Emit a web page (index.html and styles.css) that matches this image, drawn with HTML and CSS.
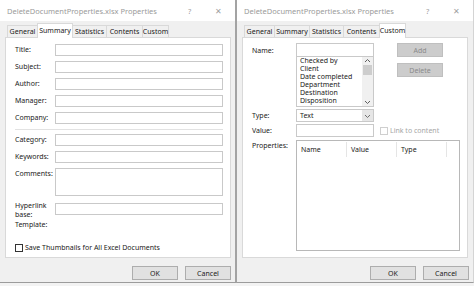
FILE: index.html
```html
<!DOCTYPE html>
<html lang="en">
<head>
<meta charset="UTF-8">
<title>Properties</title>
<link rel="stylesheet" href="styles.css">
</head>
<body>
<div class="screen">

  <!-- Summary tab dialog -->
  <div class="dialog left">
    <div class="titlebar">
      <span class="title">DeleteDocumentProperties.xlsx Properties</span>
      <span class="help">?</span>
      <span class="close">&#x2715;</span>
    </div>
    <div class="tabs">
      <div class="tab t-general">General</div>
      <div class="tab t-summary selected">Summary</div>
      <div class="tab t-stats">Statistics</div>
      <div class="tab t-contents">Contents</div>
      <div class="tab t-custom">Custom</div>
    </div>
    <div class="panel summary">
      <div class="row"><label>Title:</label><div class="input"></div></div>
      <div class="row"><label>Subject:</label><div class="input"></div></div>
      <div class="row"><label>Author:</label><div class="input"></div></div>
      <div class="row"><label>Manager:</label><div class="input"></div></div>
      <div class="row"><label>Company:</label><div class="input"></div></div>
      <div class="separator"></div>
      <div class="row first"><label>Category:</label><div class="input"></div></div>
      <div class="row"><label>Keywords:</label><div class="input"></div></div>
      <div class="row tall"><label>Comments:</label><div class="input"></div></div>
      <div class="row hyperlink"><label>Hyperlink<br>base:</label><div class="input"></div></div>
      <div class="row template"><label>Template:</label></div>
      <div class="check-row"><span class="checkbox"></span><span>Save Thumbnails for All Excel Documents</span></div>
    </div>
    <div class="buttons">
      <div class="button">OK</div>
      <div class="button">Cancel</div>
    </div>
  </div>

  <!-- Custom tab dialog -->
  <div class="dialog right">
    <div class="titlebar">
      <span class="title">DeleteDocumentProperties.xlsx Properties</span>
      <span class="help">?</span>
      <span class="close">&#x2715;</span>
    </div>
    <div class="tabs">
      <div class="tab t-general">General</div>
      <div class="tab t-summary">Summary</div>
      <div class="tab t-stats">Statistics</div>
      <div class="tab t-contents">Contents</div>
      <div class="tab t-custom selected">Custom</div>
    </div>
    <div class="panel custom">
      <div class="name-area">
        <label class="c-label">Name:</label>
        <div class="name-group">
          <div class="input name-input"></div>
          <div class="listbox">
            <div class="items">
              <div>Checked by</div>
              <div>Client</div>
              <div>Date completed</div>
              <div>Department</div>
              <div>Destination</div>
              <div>Disposition</div>
            </div>
            <div class="scrollbar">
              <svg width="11" height="8" viewBox="0 0 11 8"><polyline points="3,5 5.5,2.5 8,5" fill="none" stroke="#606060" stroke-width="1"/></svg>
              <div class="thumb"></div>
              <div class="track"></div>
              <svg width="11" height="8" viewBox="0 0 11 8"><polyline points="3,3 5.5,5.5 8,3" fill="none" stroke="#606060" stroke-width="1"/></svg>
            </div>
          </div>
        </div>
        <div class="side-buttons">
          <div class="button disabled">Add</div>
          <div class="button disabled">Delete</div>
        </div>
      </div>
      <div class="c-row type-row">
        <label class="c-label">Type:</label>
        <div class="combo">
          <span class="combo-text">Text</span>
          <span class="combo-btn"><svg width="11" height="10" viewBox="0 0 11 10"><polyline points="3,4 5.5,6.5 8,4" fill="none" stroke="#707070" stroke-width="1"/></svg></span>
        </div>
      </div>
      <div class="c-row value-row">
        <label class="c-label">Value:</label>
        <div class="input value-input"></div>
        <span class="checkbox disabled"></span>
        <span class="link-text">Link to content</span>
      </div>
      <div class="c-row props-row">
        <label class="c-label">Properties:</label>
        <div class="listview">
          <div class="lv-header">
            <div class="col">Name</div>
            <div class="col">Value</div>
            <div class="col">Type</div>
          </div>
        </div>
      </div>
    </div>
    <div class="buttons">
      <div class="button">OK</div>
      <div class="button">Cancel</div>
    </div>
  </div>

</div>
</body>
</html>
```

FILE: styles.css
```css
/* styles.css */
body {
  margin: 0;
  background-color: #f3f3f3;
  font-family: 'Noto Sans', 'Open Sans', sans-serif;
  font-size: 7px;
  color: #1a1a1a;
}

.screen {
  display: flex;
  width: 474px;
  height: 286px;
}

.dialog {
  width: 237px;
  height: 283px;
  box-sizing: border-box;
  background-color: #f0f0f0;
  border-bottom: 1px solid #9c9c9c;
}

.dialog.left {
  border-right: 2px solid #a3a3a3;
}

.dialog.right {
  border-right: 1px solid #d4d4d4;
}

/* title bar */
.titlebar {
  height: 21px;
  background-color: #fff;
  display: flex;
  align-items: center;
  padding-left: 7px;
  color: #9a9a9a;
  font-size: 7.5px;
}

.title {
  flex: 1;
}

.help {
  width: 27px;
  color: #a0a0a0;
}

.close {
  width: 20px;
  color: #a0a0a0;
  font-size: 8px;
}

/* tabs */
.tabs {
  display: flex;
  align-items: flex-end;
  height: 16px;
  padding-left: 7px;
}

.tab {
  height: 12px;
  box-sizing: border-box;
  border: 1px solid #d9d9d9;
  border-bottom: none;
  margin-right: -1px;
  display: flex;
  align-items: center;
  justify-content: center;
  background-color: #f0f0f0;
  position: relative;
}

.t-general { width: 31px; }
.t-summary { width: 36px; }
.t-stats { width: 35px; }
.t-contents { width: 37px; }
.t-custom { width: 27px; }

.tab.selected {
  height: 15px;
  background-color: #fff;
  margin-bottom: -1px;
  z-index: 1;
  padding-bottom: 2px;
}

/* tab page */
.panel {
  margin-left: 5px;
  width: 226px;
  height: 221px;
  box-sizing: border-box;
  background-color: #fff;
  border: 1px solid #d9d9d9;
}

.summary {
  padding: 6px 7px 0 9px;
}

.row {
  display: flex;
  height: 12px;
  margin-bottom: 5px;
}

.row label {
  width: 40px;
  line-height: 12px;
}

.input {
  flex: 1;
  box-sizing: border-box;
  border: 1px solid #c9c9c9;
  background-color: #fff;
}

.separator {
  height: 1px;
  background-color: #e2e2e2;
  margin: 1px 0 4px 0;
}

.row.tall {
  height: 28px;
  margin-bottom: 7px;
}

.row.hyperlink label {
  margin-top: -2px;
  line-height: 9px;
}

.row.template {
  margin-top: -1px;
}

.check-row {
  display: flex;
  align-items: center;
  margin-top: 12px;
}

.checkbox {
  width: 8px;
  height: 8px;
  box-sizing: border-box;
  border: 1px solid #333;
  background-color: #fff;
  margin-right: 2px;
}

/* bottom buttons */
.buttons {
  display: flex;
  justify-content: flex-end;
  gap: 7px;
  padding: 8px 4px 0 0;
}

.button {
  width: 46px;
  height: 14px;
  box-sizing: border-box;
  border: 1px solid #adadad;
  background-color: #e1e1e1;
  display: flex;
  align-items: center;
  justify-content: center;
}

.button.disabled {
  background-color: #cccccc;
  border-color: #bfbfbf;
  color: #8a8a8a;
}

/* custom tab */
.custom {
  padding: 5px 0 0 9px;
}

.c-label {
  width: 44px;
  flex-shrink: 0;
}

.name-area {
  display: flex;
}

.name-area .c-label {
  line-height: 16px;
}

.name-group {
  width: 78px;
}

.name-input {
  height: 14px;
}

.listbox {
  display: flex;
  height: 50px;
  box-sizing: border-box;
  border: 1px solid #c9c9c9;
  border-top: none;
  margin-top: 0;
}

.items {
  flex: 1;
  padding: 0 0 0 3px;
  line-height: 8px;
  font-size: 7px;
}

.scrollbar {
  width: 11px;
  background-color: #f0f0f0;
  display: flex;
  flex-direction: column;
}

.scrollbar svg {
  display: block;
}

.thumb {
  height: 10px;
  margin: 0 1px;
  background-color: #cdcdcd;
}

.track {
  flex: 1;
}

.side-buttons {
  margin-left: 23px;
  display: flex;
  flex-direction: column;
  gap: 6px;
}

.c-row {
  display: flex;
  align-items: center;
}

.type-row {
  margin-top: 2px;
}

.combo {
  width: 78px;
  height: 13px;
  box-sizing: border-box;
  border: 1px solid #c9c9c9;
  display: flex;
  align-items: center;
}

.combo-text {
  flex: 1;
  padding-left: 3px;
}

.combo-btn {
  width: 11px;
  height: 11px;
  background-color: #e6e6e6;
  display: flex;
  align-items: center;
  justify-content: center;
}

.value-row {
  margin-top: 2px;
}

.value-input {
  flex: none;
  width: 78px;
  height: 13px;
}

.checkbox.disabled {
  border-color: #cfcfcf;
  margin-left: 6px;
}

.link-text {
  color: #a6a6a6;
}

.props-row {
  align-items: flex-start;
  margin-top: 3px;
}

.props-row .c-label {
  margin-top: 1px;
}

.listview {
  width: 164px;
  height: 111px;
  box-sizing: border-box;
  border: 1px solid #b8b8b8;
}

.lv-header {
  display: flex;
  height: 15px;
  margin-top: 1px;
}

.col {
  width: 50px;
  padding-left: 4px;
  box-sizing: border-box;
  border-right: 1px solid #e5e5e5;
  line-height: 15px;
}
```
